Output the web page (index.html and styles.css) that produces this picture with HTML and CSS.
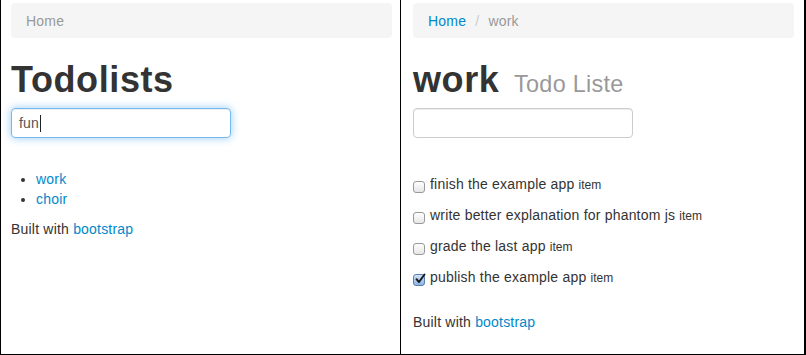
FILE: index.html
```html
<!DOCTYPE html>
<html lang="en">
<head>
  <meta charset="UTF-8" />
  <title>Todolists</title>
  <link rel="stylesheet" href="styles.css">
</head>
<body>
  <div class="frame">
    <div class="pane pane-left">
      <ul class="breadcrumb">
        <li class="active">Home</li>
      </ul>
      <h1>Todolists</h1>
      <div class="field focused">fun<span class="caret"></span></div>
      <ul class="lists">
        <li><a href="#">work</a></li>
        <li><a href="#">choir</a></li>
      </ul>
      <p>Built with <a href="#">bootstrap</a></p>
    </div>
    <div class="pane pane-right">
      <ul class="breadcrumb">
        <li><a href="#">Home</a> <span class="divider">/</span></li>
        <li class="active">work</li>
      </ul>
      <h1>work <small>Todo Liste</small></h1>
      <div class="field"></div>
      <div class="todos">
        <label class="todo"><span class="box"></span>finish the example app <small>item</small></label>
        <label class="todo"><span class="box"></span>write better explanation for phantom js <small>item</small></label>
        <label class="todo"><span class="box"></span>grade the last app <small>item</small></label>
        <label class="todo"><span class="box checked"><svg viewBox="0 0 12 12" width="12" height="12"><path d="M2.5 6.2 L5 9 L10.5 1.5" fill="none" stroke="#1a1a1a" stroke-width="2" stroke-linecap="round" stroke-linejoin="round"/></svg></span>publish the example app <small>item</small></label>
      </div>
      <p class="footer">Built with <a href="#">bootstrap</a></p>
    </div>
  </div>
</body>
</html>
```

FILE: styles.css
```css
* {
  box-sizing: border-box;
}
body {
  margin: 0;
  font-family: "Liberation Sans", Arial, sans-serif;
  font-size: 14px;
  line-height: 20px;
  letter-spacing: 0.2px;
  color: #333;
  background: #fff;
}
a {
  color: #0088cc;
  text-decoration: none;
}
.frame {
  display: flex;
  width: 806px;
  height: 355px;
  border-left: 1px solid #000;
  border-right: 2px solid #000;
  border-bottom: 1px solid #000;
}
.pane {
  padding-top: 3px;
}
.pane-left {
  width: 399px;
  padding-left: 10px;
  padding-right: 8px;
}
.pane-right {
  flex: 1;
  border-left: 1px solid #000;
  padding-left: 12px;
  padding-right: 10px;
}
.breadcrumb {
  list-style: none;
  margin: 0;
  padding: 9px 15px 7px;
  line-height: 19px;
  background: #f5f5f5;
  border-radius: 4px;
}
.breadcrumb li {
  display: inline-block;
}
.breadcrumb .active {
  color: #999;
}
.breadcrumb .divider {
  padding: 0 5px;
  color: #ccc;
}
h1 {
  margin: 22px 0 8px;
  font-size: 36px;
  line-height: 40px;
  font-weight: bold;
  letter-spacing: 0.6px;
  color: #333;
}
h1 small {
  margin-left: 4px;
  font-size: 23.4px;
  line-height: 1;
  font-weight: normal;
  letter-spacing: 0.3px;
  color: #999;
}
.field {
  width: 220px;
  height: 30px;
  padding: 4px 7px;
  border: 1px solid #ccc;
  border-radius: 4px;
  line-height: 20px;
  color: #555;
  box-shadow: inset 0 1px 1px rgba(0, 0, 0, 0.075);
}
.field.focused {
  border-color: rgba(82, 168, 236, 0.8);
  box-shadow: inset 0 1px 1px rgba(0, 0, 0, 0.075), 0 0 8px rgba(82, 168, 236, 0.6);
}
.caret {
  display: inline-block;
  width: 1px;
  height: 17px;
  margin-left: 1px;
  vertical-align: -4px;
  background: #222;
}
.lists {
  margin: 31px 0 10px 25px;
  padding: 0;
}
p {
  margin: 0;
}
.todos {
  margin-top: 36px;
  display: flex;
  flex-direction: column;
  gap: 11px;
}
.todo {
  display: block;
  height: 20px;
  line-height: 20px;
}
.todo small {
  font-size: 12px;
  line-height: 1;
  letter-spacing: 0;
}
.box {
  display: inline-block;
  width: 12px;
  height: 12px;
  margin-right: 5px;
  vertical-align: -4px;
  border: 1px solid #9a9a9a;
  border-radius: 3px;
  background: linear-gradient(#ffffff, #e6e6e6);
  position: relative;
}
.box.checked {
  border-color: #5a7fb0;
  background: linear-gradient(#cfe2f8, #8db4e6);
}
.box svg {
  position: absolute;
  left: 0;
  top: -2px;
}
.footer {
  margin-top: 25px;
}
```
